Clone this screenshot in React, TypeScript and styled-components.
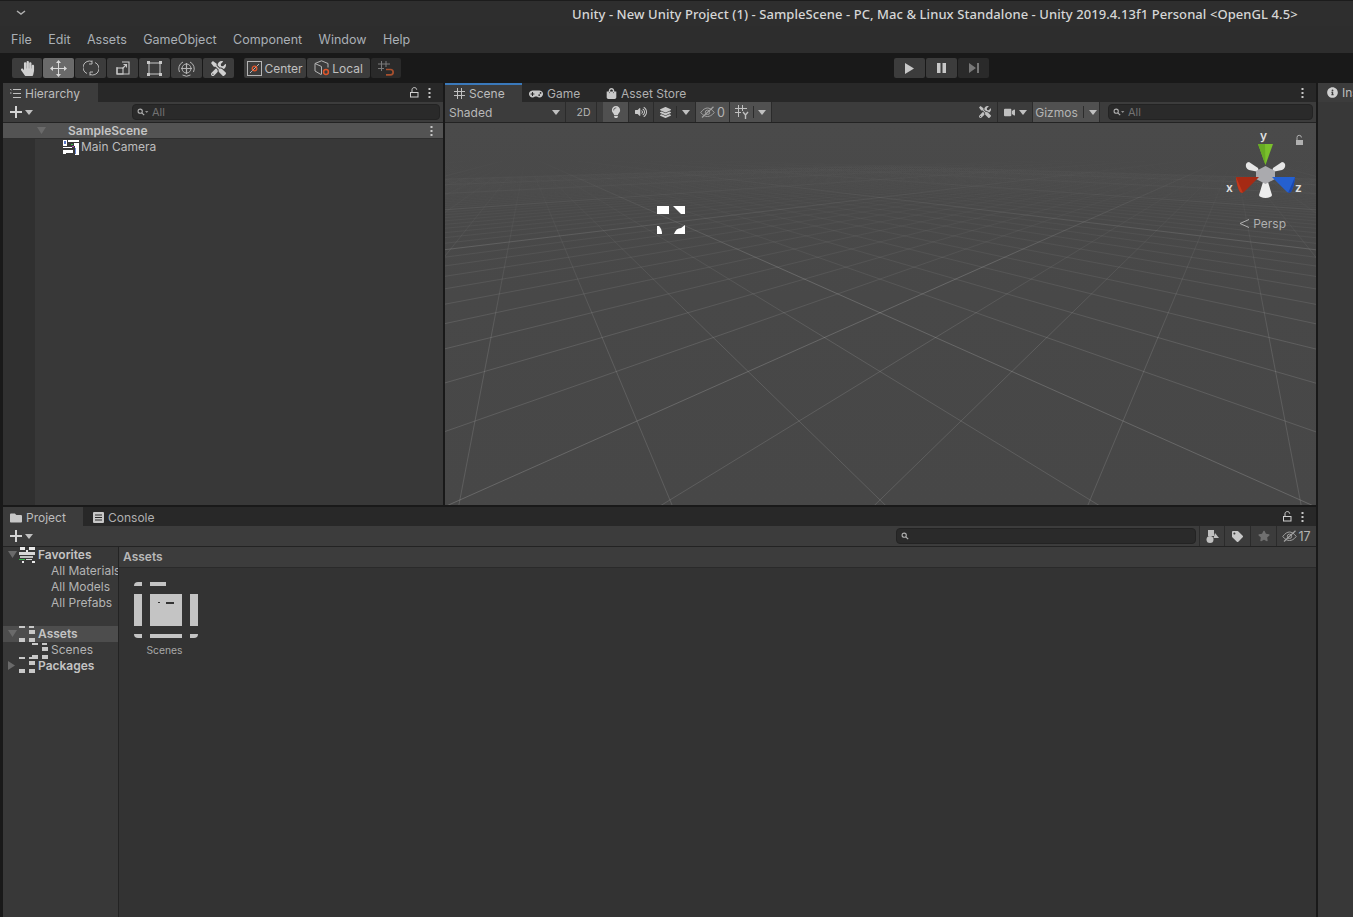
import { ReactNode } from "react";
import styled, { createGlobalStyle } from "styled-components";
import {
  FaGamepad,
  FaHandPaper,
  FaInfoCircle,
  FaLayerGroup,
  FaLightbulb,
  FaShoppingBag,
  FaStar,
  FaTag,
  FaTools,
  FaVideo,
  FaVolumeUp,
  FaFolder,
} from "react-icons/fa";

const GlobalStyle = createGlobalStyle`
  html, body {
    margin: 0;
    height: 100%;
    overflow: hidden;
    background: #191919;
    font-family: Inter, "Liberation Sans", sans-serif;
    font-size: 12px;
    color: #b8b8b8;
  }
  #root { height: 100%; }
`;

const Editor = styled.div`
  height: 917px;
  display: flex;
  flex-direction: column;
`;

const TitleBar = styled.div`
  height: 26px;
  box-sizing: border-box;
  border-top: 1px solid #1c1c1c;
  background: #2e2e2e;
  display: flex;
  align-items: center;
  position: relative;
  padding: 0 40px 0 572px;
`;

const TitleText = styled.div`
  font-family: "Noto Sans", sans-serif;
  font-weight: 500;
  font-size: 13px;
  letter-spacing: 0.07px;
  white-space: nowrap;
  color: #d6d6d6;
`;

const WindowChevron = styled.svg`
  position: absolute;
  left: 16px;
  top: 9px;
`;

const MenuBar = styled.div`
  height: 27px;
  background: #2d2d2d;
  display: flex;
  align-items: center;
  gap: 16.4px;
  padding-left: 11px;
`;

const MenuItem = styled.span`
  font-size: 12.5px;
  letter-spacing: 0.02px;
  color: #aab0b6;
`;

const MainToolbar = styled.div`
  height: 30px;
  background: #191919;
  display: flex;
  align-items: center;
  padding: 0 0 0 12px;
`;

const ToolGroup = styled.div<{ $gap?: number; $left?: number }>`
  display: flex;
  gap: ${(p) => p.$gap ?? 1}px;
  margin-left: ${(p) => p.$left ?? 0}px;
`;

const ToolButton = styled.div<{ $w?: number; $on?: boolean; $dim?: boolean }>`
  width: ${(p) => p.$w ?? 31}px;
  height: 20px;
  box-sizing: border-box;
  display: flex;
  align-items: center;
  justify-content: center;
  gap: 2px;
  font-size: 12px;
  color: #c0c0c0;
  border-radius: 2px;
  background: ${(p) => (p.$on ? "#6a6a6a" : p.$dim ? "#2a2a2a" : "#3c3c3c")};
`;

const Workspace = styled.div`
  flex: 1;
  min-height: 0;
  display: flex;
  padding-left: 3px;
`;

const MainColumn = styled.div`
  flex: 1;
  min-width: 0;
  display: flex;
  flex-direction: column;
  gap: 2px;
`;

const UpperRow = styled.div`
  height: 422px;
  display: flex;
  gap: 2px;
`;

const Panel = styled.div<{ $w?: number }>`
  display: flex;
  flex-direction: column;
  min-width: 0;
  background: #383838;
  ${(p) => (p.$w ? `width: ${p.$w}px; flex: none;` : "flex: 1;")}
`;

const TabStrip = styled.div`
  height: 19px;
  flex: none;
  background: #282828;
  display: flex;
  align-items: center;
`;

const Tab = styled.div<{ $w: number; $pad?: number; $active?: boolean; $accent?: boolean }>`
  width: ${(p) => p.$w}px;
  height: 100%;
  box-sizing: border-box;
  flex: none;
  display: flex;
  align-items: center;
  gap: 4px;
  padding: ${(p) => (p.$accent ? "0" : "2px")} 0 0 ${(p) => p.$pad ?? 7}px;
  white-space: nowrap;
  overflow: hidden;
  color: ${(p) => (p.$active ? "#bdbdbd" : "#b0b0b0")};
  background: ${(p) => (p.$active ? "#3c3c3c" : "transparent")};
  border-top: ${(p) => (p.$accent ? "2px solid #3a79bb" : "none")};
  svg { flex: none; }
`;

const Spacer = styled.div`
  flex: 1;
`;

const EdgeGap = styled.div`
  flex: 0 0 3px;
`;

const StripIcons = styled.div`
  display: flex;
  align-items: center;
  gap: 9px;
  padding-right: 12px;
  color: #c4c4c4;
`;

const PanelBar = styled.div`
  height: 21px;
  flex: none;
  box-sizing: border-box;
  border-bottom: 1px solid #232323;
  background: #3c3c3c;
  display: flex;
  align-items: center;
`;

const AddButton = styled.div`
  width: 32px;
  padding-left: 7px;
  box-sizing: border-box;
  display: flex;
  align-items: center;
  gap: 3px;
  flex: none;
`;

const SearchField = styled.div<{ $w?: number; $left?: number }>`
  height: 16px;
  box-sizing: border-box;
  border: 1px solid #232323;
  border-radius: 4px;
  background: #2a2a2a;
  display: flex;
  align-items: center;
  gap: 3px;
  padding-left: 4px;
  font-size: 11px;
  color: #727272;
  margin-left: ${(p) => p.$left ?? 0}px;
  ${(p) => (p.$w ? `width: ${p.$w}px; flex: none;` : "flex: 1;")}
`;

const HierarchyTree = styled.div`
  flex: 1;
  position: relative;
  background: linear-gradient(to right, #303030 32px, #383838 32px);
`;

const SceneRow = styled.div`
  height: 16px;
  box-sizing: border-box;
  background: #535353;
  border-bottom: 1px solid #2e2e2e;
  display: flex;
  align-items: center;
  padding: 0 10px 0 34px;
  font-weight: 600;
  color: #c4c4c4;
  gap: 22px;
`;

const ObjectRow = styled.div`
  height: 16px;
  box-sizing: border-box;
  display: flex;
  align-items: center;
  gap: 2px;
  padding: 0 0 1px 60px;
  color: #bdbdbd;
  svg { flex: none; margin-top: 1px; }
`;

const ToolStripGroup = styled.div`
  display: flex;
  align-items: center;
  height: 100%;
`;

const BarButton = styled.div<{ $w: number; $on?: boolean; $left?: number; $open?: boolean; $edge?: boolean; $gap?: number; $size?: number }>`
  width: ${(p) => p.$w}px;
  height: 100%;
  flex: none;
  box-sizing: border-box;
  margin-left: ${(p) => p.$left ?? 0}px;
  border-right: ${(p) => (p.$open ? "none" : "1px solid #2b2b2b")};
  border-left: ${(p) => (p.$edge ? "1px solid #2b2b2b" : "none")};
  display: flex;
  align-items: center;
  justify-content: center;
  gap: ${(p) => p.$gap ?? 4}px;
  font-size: ${(p) => p.$size ?? 12}px;
  color: #b4b4b4;
  background: ${(p) => (p.$on ? "#505050" : "#3c3c3c")};
`;

const ShadedSelect = styled.div`
  width: 121px;
  flex: none;
  height: 100%;
  box-sizing: border-box;
  display: flex;
  align-items: center;
  justify-content: space-between;
  padding: 0 5px 0 4px;
  border-right: 1px solid #2b2b2b;
  color: #b8b8b8;
`;

const BarDivider = styled.span`
  width: 1px;
  height: 12px;
  background: #2c2c2c;
  margin: 0 1px;
`;

const SceneView = styled.div`
  flex: 1;
  position: relative;
  overflow: hidden;
  background: linear-gradient(#4a4a4a 0, #484848 45%, #474747 100%);
`;

const GridCanvas = styled.svg`
  display: block;
`;

const CameraGizmo = styled.svg`
  position: absolute;
  left: 212px;
  top: 83px;
`;

const AxisGizmo = styled.svg`
  position: absolute;
  right: 9px;
  top: 5px;
`;

const PerspLabel = styled.div`
  position: absolute;
  right: 30px;
  top: 93px;
  display: flex;
  align-items: center;
  gap: 3px;
  color: #b0b0b0;
`;

const InspectorStub = styled.div`
  width: 35px;
  flex: none;
  margin-left: 2px;
  display: flex;
  flex-direction: column;
  background: #383838;
  overflow: hidden;
`;

const InspectorTab = styled.div`
  height: 19px;
  background: #3c3c3c;
  display: flex;
  align-items: center;
  gap: 4px;
  padding-left: 9px;
  white-space: nowrap;
  color: #bdbdbd;
  svg { flex: none; }
`;

const ProjectBody = styled.div`
  flex: 1;
  min-height: 0;
  display: flex;
`;

const FolderTree = styled.div`
  width: 115px;
  flex: none;
  box-sizing: content-box;
  border-right: 1px solid #232323;
  background: #383838;
  overflow: hidden;
`;

const TreeItem = styled.div<{ $pad: number; $bold?: boolean; $selected?: boolean; $top?: number }>`
  height: 16px;
  box-sizing: border-box;
  display: flex;
  align-items: center;
  white-space: nowrap;
  gap: 3px;
  padding: 0 0 1px ${(p) => p.$pad}px;
  margin-top: ${(p) => p.$top ?? 0}px;
  font-weight: ${(p) => (p.$bold ? 600 : 400)};
  color: ${(p) => (p.$bold ? "#c4c4c4" : "#b4b4b4")};
  background: ${(p) => (p.$selected ? "#4d4d4d" : "transparent")};
  svg { flex: none; overflow: visible; }
`;

const TreeArrow = styled.svg<{ $gap: number }>`
  margin-right: ${(p) => p.$gap}px;
`;

const AssetsPane = styled.div`
  flex: 1;
  min-width: 0;
  background: #333333;
`;

const Breadcrumb = styled.div`
  height: 21px;
  box-sizing: border-box;
  border-bottom: 1px solid #2a2a2a;
  background: #3c3c3c;
  display: flex;
  align-items: center;
  padding: 0 0 1px 4px;
  font-weight: 600;
  color: #b8b8b8;
`;

const AssetGrid = styled.div`
  display: flex;
  padding: 14px 0 0 15px;
`;

const AssetCard = styled.div`
  width: 64px;
  display: flex;
  flex-direction: column;
  align-items: center;
  gap: 6px;
  font-size: 10.3px;
  color: #a8a8a8;
`;

const AssetName = styled.span`
  margin-right: 3px;
`;

const Caret = ({ color = "#c0c0c0" }: { color?: string }) => (
  <svg width="8" height="5" viewBox="0 0 8 5">
    <path d="M0 0h8L4 5z" fill={color} />
  </svg>
);

const SearchIcon = ({ caret = true }: { caret?: boolean }) => (
  <svg width="12" height="8" viewBox="0 0 12 8" fill="none">
    <circle cx="3.2" cy="3.2" r="2.1" stroke="#b0b0b0" strokeWidth="1.1" />
    <path d="M4.8 4.8 7.2 7.2" stroke="#b0b0b0" strokeWidth="1.2" />
    {caret && <path d="M8 3h3.4L9.7 5z" fill="#909090" />}
  </svg>
);

const Dots = () => (
  <svg width="3" height="10" viewBox="0 0 3 10">
    <rect x="0.5" y="0" width="2" height="2" fill="#c8c8c8" />
    <rect x="0.5" y="4" width="2" height="2" fill="#c8c8c8" />
    <rect x="0.5" y="8" width="2" height="2" fill="#c8c8c8" />
  </svg>
);

const OpenLock = ({ color = "#d0d0d0" }: { color?: string }) => (
  <svg width="9" height="11" viewBox="0 0 9 11" fill="none">
    <path d="M2 5V2.7C2 1.4 3 .6 4.3.6S6.700 1.400 6.700 2.700" stroke={color} />
    <rect x="0.5" y="5.5" width="7.500" height="4.500" stroke={color} />
  </svg>
);

const Plus = () => (
  <svg width="12" height="12" viewBox="0 0 12 12">
    <path d="M5 0h2v5h5v2H7v5H5V7H0V5h5z" fill="#d4d4d4" />
  </svg>
);

const HiddenEye = () => (
  <svg width="15" height="12" viewBox="0 0 15 12" fill="none" stroke="#a0a0a0">
    <path d="M.8 6.500C3 3.300 5.500 2 7.500 2s4.500 1.300 6.700 4.500C12 9.500 9.500 10.500 7.500 10.500S3 9.500.8 6.500z" />
    <circle cx="7.500" cy="6.300" r="2.200" />
    <path d="M2 11.500 13.500.8" strokeWidth="1.300" />
  </svg>
);

const GridGlyph = ({ color = "#c0c0c0" }: { color?: string }) => (
  <svg width="11" height="11" viewBox="0 0 11 11" stroke={color} fill="none">
    <path d="M3.500 0v11M7.500 0v11M0 3.500h11M0 7.500h11" />
  </svg>
);

const GridVisibility = () => (
  <svg width="14" height="14" viewBox="0 0 14 14" fill="none" stroke="#c0c0c0">
    <path d="M3.500 0v12M7.500 0v6M0 3.500h12M0 7.500h6" />
    <path d="M8 7l2.500 3L13 7M10.500 10v4" strokeWidth="1.400" />
  </svg>
);

const MoveIcon = () => (
  <svg width="17" height="17" viewBox="0 0 17 17" fill="#d8d8d8">
    <path d="M8.500 0 11 3H6zM8.500 17 6 14h5zM0 8.500 3 6v5zM17 8.500 14 11V6z" />
    <path d="M8 3h1v11H8zM3 8h11v1H3z" />
  </svg>
);

const RotateIcon = () => (
  <svg width="16" height="16" viewBox="0 0 16 16" fill="none" stroke="#b8b8b8">
    <path d="M9 1.500A6.500 6.500 0 0 0 4 13.500" />
    <path d="M7 14.500A6.500 6.500 0 0 0 12 2.500" />
    <path d="M9 .5v3.500h-3M7 15.500V12h3" />
  </svg>
);

const ScaleIcon = () => (
  <svg width="14" height="14" viewBox="0 0 14 14" fill="none" stroke="#c8c8c8" strokeWidth="1.100">
    <path d="M6 1H13V13H1V6" />
    <rect x="1" y="7" width="6" height="6" />
    <path d="M6.500 7.500 10.500 3.500M7.500 3.500h3v3" />
  </svg>
);

const RectIcon = () => (
  <svg width="15" height="15" viewBox="0 0 15 15" fill="#c8c8c8">
    <path d="M2 2h11v11H2z" fill="none" stroke="#c8c8c8" />
    <rect x="0" y="0" width="3" height="3" />
    <rect x="12" y="0" width="3" height="3" />
    <rect x="0" y="12" width="3" height="3" />
    <rect x="12" y="12" width="3" height="3" />
  </svg>
);

const TransformIcon = () => (
  <svg width="17" height="17" viewBox="0 0 17 17" fill="none" stroke="#b4b4b4">
    <path d="M1.500 12A7.500 7.500 0 0 1 5 2M12 2A7.500 7.500 0 0 1 15.500 12M4.500 15a7.500 7.500 0 0 0 8 0" />
    <circle cx="8.500" cy="8.500" r="4.500" />
    <path d="M8.500 3v11M3 8.500h11" strokeWidth="1.200" />
  </svg>
);

const PivotIcon = () => (
  <svg width="15" height="15" viewBox="0 0 15 15" fill="none">
    <rect x="0.500" y="0.500" width="14" height="14" stroke="#b4b4b4" />
    <path d="M3 12 12 3" stroke="#b4b4b4" />
    <circle cx="7.500" cy="7.500" r="2.300" stroke="#e0562b" strokeWidth="1.300" />
  </svg>
);

const LocalIcon = () => (
  <svg width="16" height="16" viewBox="0 0 16 16" fill="none">
    <path d="M7.500 .8 14 3.500v4M7.500.8 1 3.500V11l6 3.500M1 3.500l6.500 3v8" stroke="#b4b4b4" />
    <circle cx="12" cy="12" r="2.400" stroke="#e0562b" strokeWidth="1.500" />
  </svg>
);

const SnapIcon = () => (
  <svg width="17" height="15" viewBox="0 0 17 15" fill="none">
    <path d="M3.500 0v10M8 0v6M0 3h12M0 7.500h6" stroke="#7a7a7a" />
    <path d="M8 8.500h4.500a2.500 2.500 0 0 1 0 5.300H8" stroke="#a8502e" strokeWidth="1.700" />
  </svg>
);

const HierarchyGlyph = () => (
  <svg width="11" height="9" viewBox="0 0 11 9" fill="none" stroke="#c0c0c0">
    <path d="M3 .5h8M3 4.500h8M3 8.500h8M0 0l1.500 1M0 4h1.500" />
  </svg>
);

const ConsoleGlyph = () => (
  <svg width="11" height="11" viewBox="0 0 11 11">
    <rect x="0" y="0" width="11" height="11" rx="1" fill="#c8c8c8" />
    <path d="M2 3h7M2 5.500h7M2 8h7" stroke="#282828" />
  </svg>
);

const FilterShapes = () => (
  <svg width="13" height="13" viewBox="0 0 13 13" fill="#c0c0c0">
    <rect x="2" y="0" width="6" height="6" />
    <circle cx="4" cy="9.500" r="3.500" />
    <path d="M9 3l4 5H7.500z" />
  </svg>
);

// corrupted editor textures, drawn block by block
const CameraTexture = () => (
  <svg width="16" height="15" viewBox="0 0 16 15">
    <rect x="0" y="0" width="4" height="6" fill="#fff" />
    <rect x="1" y="1" width="2" height="3" fill="#5a78c8" />
    <rect x="5" y="0" width="11" height="2" fill="#fff" />
    <rect x="6" y="3" width="5" height="3" fill="#383838" />
    <rect x="8" y="4" width="2" height="1" fill="#39b54a" />
    <rect x="11" y="3" width="5" height="3" fill="#fff" />
    <rect x="0" y="7" width="9" height="1" fill="#fff" />
    <rect x="9" y="6" width="2" height="1" fill="#b04ac0" />
    <rect x="0" y="10" width="10" height="3" fill="#fff" />
    <rect x="12" y="6" width="4" height="9" fill="#fff" />
    <rect x="12" y="8" width="1" height="6" fill="#6a8ad8" />
    <rect x="0" y="13" width="3" height="1" fill="#fff" />
  </svg>
);

const FavoritesTexture = () => (
  <svg width="16" height="16" viewBox="0 0 16 16">
    <rect x="1" y="0" width="5" height="3" fill="#e8e8e8" />
    <rect x="10" y="0" width="6" height="3" fill="#e8e8e8" />
    <rect x="7" y="3" width="2" height="2" fill="#e8e8e8" />
    <rect x="0" y="5" width="16" height="3" fill="#d8d8d8" />
    <rect x="1" y="9" width="13" height="2" fill="#c0c0c0" />
    <rect x="0" y="12" width="6" height="1" fill="#39b54a" />
    <rect x="7" y="12" width="6" height="1" fill="#d8d8d8" />
    <rect x="3" y="14" width="2" height="2" fill="#e8e8e8" />
    <rect x="13" y="14" width="3" height="2" fill="#e8e8e8" />
  </svg>
);

const FolderTexture = ({ lift = 0 }: { lift?: number }) => (
  <svg width="16" height="16" viewBox="0 0 16 16" style={{ marginTop: lift }}>
    <rect x="0" y="0" width="6" height="2" fill="#c8c8c8" />
    <rect x="10" y="0" width="5" height="2" fill="#c8c8c8" />
    <rect x="10" y="4" width="6" height="4" fill="#c8c8c8" />
    <rect x="0" y="12" width="6" height="4" fill="#c8c8c8" />
    <rect x="10" y="12" width="6" height="4" fill="#c8c8c8" />
  </svg>
);

const ScenesFolder = () => (
  <svg width="64" height="56" viewBox="0 0 64 56" fill="#c4c4c4">
    <path d="M0 4a4 4 0 0 1 4-4h4v4z" />
    <rect x="16" y="0" width="16" height="4" />
    <rect x="0" y="12" width="8" height="32" />
    <path d="M16 12h32v32H16z" />
    <rect x="24" y="20" width="2" height="1" fill="#333" />
    <rect x="32" y="20" width="8" height="2" fill="#333" />
    <rect x="56" y="12" width="8" height="32" />
    <path d="M0 52h8v4H4a4 4 0 0 1-4-4z" />
    <rect x="16" y="52" width="32" height="4" />
    <path d="M56 52h8a4 4 0 0 1-4 4h-4z" />
  </svg>
);

// floor grid, two vanishing points on a horizon at y=155
const HORIZON = 155;
const CENTER_X = 880;
const project = (a: number, depth: number, flip: boolean) => {
  const w = 0.002899 + 0.00086 * depth;
  const b = depth - a;
  const side = (a - b) / 2;
  return {
    x: CENTER_X + (flip ? -side : side) * (0.609 / w),
    y: HORIZON + 1 / w,
  };
};

const gridLines: { key: string; x1: number; y1: number; x2: number; y2: number; major: boolean }[] = [];
for (let k = -48; k <= 52; k++) {
  for (const flip of [false, true]) {
    const near = project(k, -3, flip);
    const far = project(k, 1500, flip);
    // the axes cross at a=b=2, heavy lines every 10 units from there
    gridLines.push({
      key: `${k}-${flip}`,
      x1: near.x,
      y1: near.y,
      x2: far.x,
      y2: far.y,
      major: (k - 2) % 10 === 0,
    });
  }
}

const SceneGrid = () => (
  <GridCanvas width="871" height="382" viewBox="445 123 871 382">
    <defs>
      <linearGradient id="minorFade" gradientUnits="userSpaceOnUse" x1="0" y1="158" x2="0" y2="340">
        <stop offset="0" stopColor="#fff" stopOpacity="0" />
        <stop offset="0.2" stopColor="#fff" stopOpacity="0.015" />
        <stop offset="1" stopColor="#fff" stopOpacity="0.12" />
      </linearGradient>
      <linearGradient id="majorFade" gradientUnits="userSpaceOnUse" x1="0" y1="158" x2="0" y2="270">
        <stop offset="0" stopColor="#fff" stopOpacity="0" />
        <stop offset="0.4" stopColor="#fff" stopOpacity="0.06" />
        <stop offset="1" stopColor="#fff" stopOpacity="0.17" />
      </linearGradient>
    </defs>
    {gridLines.map((l) => (
      <line
        key={l.key}
        x1={l.x1}
        y1={l.y1}
        x2={l.x2}
        y2={l.y2}
        stroke={l.major ? "url(#majorFade)" : "url(#minorFade)"}
        strokeWidth="1"
      />
    ))}
  </GridCanvas>
);

const Gizmo = () => (
  <AxisGizmo width="82" height="72" viewBox="1225 128 82 72">
    <path d="M1249 162 1258 168 1259 172 1249 170Q1245 168 1246 164 1247 162 1249 162z" fill="#e6e6e6" />
    <path d="M1282 162 1273 168 1272 172 1282 170Q1286 168 1285 164 1284 162 1282 162z" fill="#e6e6e6" />
    <path d="M1263 182 1265.500 178 1268 182 1272 195a6.500 3 0 0 1-13 0z" fill="#ececec" />
    <path d="M1256 171 1265.500 166 1275 171 1275 179 1265.500 184 1256 179z" fill="#aaaaae" />
    <path d="M1258 144h15l-7.500 21z" fill="#7ac02c" />
    <path d="M1258 144h7l.5 21z" fill="#68ab24" />
    <path d="M1236 177h23l-13 13q-3 4-6 2-3-5-4-15z" fill="#a52a14" />
    <path d="M1236 177l7 16q-1 0-3-1-3-5-4-15z" fill="#c23a1c" />
    <path d="M1295 177h-23l13 13q3 4 6 2 3-5 4-15z" fill="#2560d0" />
    <path d="M1295 177l-7 16q1 0 3-1 3-5 4-15z" fill="#1a48b0" />
    <text x="1260" y="140" fill="#e0e0e0" fontSize="12" fontWeight="600" fontFamily="Inter, sans-serif">y</text>
    <text x="1226" y="192" fill="#e0e0e0" fontSize="12" fontWeight="600" fontFamily="Inter, sans-serif">x</text>
    <text x="1295" y="192" fill="#e0e0e0" fontSize="12" fontWeight="600" fontFamily="Inter, sans-serif">z</text>
    <path d="M1297 140v-2.500a2.200 2.200 0 0 1 4.400 0" stroke="#b0b0b0" fill="none" />
    <rect x="1296" y="140" width="7" height="5" fill="#b0b0b0" />
  </AxisGizmo>
);

const CameraMark = () => (
  <CameraGizmo width="28" height="28" viewBox="0 0 28 28" fill="#fff">
    <path d="M0 0h12v8H0zM5 0 8 2v4L5 8z" />
    <path d="M16 0h12v8h-4z" />
    <path d="M0 20h2q3 3 3 8H0z" />
    <path d="M17 28q2-6 7-6l4-3v9z" />
  </CameraGizmo>
);

const DownArrow = ({ gap = 0 }: { gap?: number }) => (
  <TreeArrow $gap={gap} width="9" height="7" viewBox="0 0 9 7">
    <path d="M0 0h9L4.500 7z" fill="#6a6a6a" />
  </TreeArrow>
);

const RightArrow = ({ gap = 0 }: { gap?: number }) => (
  <TreeArrow $gap={gap} width="7" height="9" viewBox="0 0 7 9">
    <path d="M0 0l7 4.500L0 9z" fill="#6a6a6a" />
  </TreeArrow>
);

const Tools = ({ children }: { children: ReactNode }) => <ToolGroup>{children}</ToolGroup>;

export default function App() {
  return (
    <Editor>
      <GlobalStyle />
      <TitleBar>
        <WindowChevron width="10" height="6" viewBox="0 0 10 6" fill="none" stroke="#b0b0b0" strokeWidth="1.500">
          <path d="M1 1l4 3 4-3" />
        </WindowChevron>
        <TitleText>Unity - New Unity Project (1) - SampleScene - PC, Mac &amp; Linux Standalone - Unity 2019.4.13f1 Personal &lt;OpenGL 4.5&gt;</TitleText>
      </TitleBar>
      <MenuBar>
        {["File", "Edit", "Assets", "GameObject", "Component", "Window", "Help"].map((m) => (
          <MenuItem key={m}>{m}</MenuItem>
        ))}
      </MenuBar>
      <MainToolbar>
        <Tools>
          <ToolButton $w={30}><FaHandPaper size={15} color="#d0d0d0" /></ToolButton>
          <ToolButton $on><MoveIcon /></ToolButton>
          <ToolButton><RotateIcon /></ToolButton>
          <ToolButton><ScaleIcon /></ToolButton>
          <ToolButton><RectIcon /></ToolButton>
          <ToolButton><TransformIcon /></ToolButton>
          <ToolButton><FaTools size={15} color="#d0d0d0" /></ToolButton>
        </Tools>
        <ToolGroup $left={10}>
          <ToolButton $w={62}><PivotIcon />Center</ToolButton>
          <ToolButton $w={63}><LocalIcon />Local</ToolButton>
          <ToolButton $w={30} $dim><SnapIcon /></ToolButton>
        </ToolGroup>
        <ToolGroup $left={493}>
          <ToolButton><svg width="9" height="11" viewBox="0 0 9 11"><path d="M0 0l9 5.500L0 11z" fill="#c8c8c8" /></svg></ToolButton>
          <ToolButton><svg width="9" height="10" viewBox="0 0 9 10"><path d="M0 0h3.500v10H0zM5.500 0H9v10H5.500z" fill="#c8c8c8" /></svg></ToolButton>
          <ToolButton $dim><svg width="10" height="10" viewBox="0 0 10 10"><path d="M0 0l7 5-7 5zM8 0h2v10H8z" fill="#777" /></svg></ToolButton>
        </ToolGroup>
      </MainToolbar>
      <Workspace>
        <MainColumn>
          <UpperRow>
            <Panel $w={440}>
              <TabStrip>
                <Tab $w={95} $active><HierarchyGlyph />Hierarchy</Tab>
                <Spacer />
                <StripIcons><OpenLock /><Dots /></StripIcons>
              </TabStrip>
              <PanelBar>
                <AddButton><Plus /><Caret /></AddButton>
                <SearchField $w={308} $left={97}><SearchIcon />All</SearchField>
              </PanelBar>
              <HierarchyTree>
                <SceneRow>
                  <DownArrow />
                  SampleScene
                  <Spacer />
                  <Dots />
                </SceneRow>
                <ObjectRow><CameraTexture />Main Camera</ObjectRow>
              </HierarchyTree>
            </Panel>
            <Panel>
              <TabStrip>
                <Tab $w={77} $pad={9} $active $accent><GridGlyph />Scene</Tab>
                <Tab $w={77}><FaGamepad size={14} color="#c8c8c8" />Game</Tab>
                <Tab $w={100}>
                  <FaShoppingBag size={11} color="#c8c8c8" />Asset Store
                </Tab>
                <Spacer />
                <StripIcons><Dots /></StripIcons>
              </TabStrip>
              <PanelBar>
                <ToolStripGroup>
                  <ShadedSelect>Shaded<Caret /></ShadedSelect>
                  <BarButton $w={26} $left={5} $size={10.5}>2D</BarButton>
                  <BarButton $w={26} $left={6} $on><FaLightbulb size={12} color="#d0d0d0" /></BarButton>
                  <BarButton $w={25}><FaVolumeUp size={12} color="#c8c8c8" /></BarButton>
                  <BarButton $w={42}><FaLayerGroup size={11} color="#c8c8c8" /><BarDivider /><Caret /></BarButton>
                  <BarButton $w={34} $on $gap={2} $size={12.5}><HiddenEye />0</BarButton>
                  <BarButton $w={42} $on $gap={3}><GridVisibility /><BarDivider /><Caret /></BarButton>
                </ToolStripGroup>
                <Spacer />
                <ToolStripGroup>
                  <BarButton $w={26}><FaTools size={12} color="#c0c0c0" /></BarButton>
                  <BarButton $w={35}><FaVideo size={11} color="#c0c0c0" /><Caret /></BarButton>
                  <BarButton $w={67} $on><span>Gizmos</span><BarDivider /><Caret /></BarButton>
                </ToolStripGroup>
                <SearchField $w={205} $left={8}><SearchIcon />All</SearchField>
                <EdgeGap />
              </PanelBar>
              <SceneView>
                <SceneGrid />
                <CameraMark />
                <Gizmo />
                <PerspLabel>
                  <svg width="11" height="9" viewBox="0 0 11 9" fill="none" stroke="#b0b0b0">
                    <path d="M10 .5 1 4.500 10 8.500" />
                  </svg>
                  Persp
                </PerspLabel>
              </SceneView>
            </Panel>
          </UpperRow>
          <Panel>
            <TabStrip>
              <Tab $w={80} $active><FaFolder size={12} color="#c8c8c8" />Project</Tab>
              <Tab $w={90} $pad={10}><ConsoleGlyph />Console</Tab>
              <Spacer />
              <StripIcons><OpenLock /><Dots /></StripIcons>
            </TabStrip>
            <PanelBar>
              <AddButton><Plus /><Caret /></AddButton>
              <Spacer />
              <SearchField $w={300}><SearchIcon caret={false} /></SearchField>
              <BarButton $w={26} $left={3} $edge><FilterShapes /></BarButton>
              <BarButton $w={26}><FaTag size={11} color="#c8c8c8" /></BarButton>
              <BarButton $w={26}><FaStar size={12} color="#707070" /></BarButton>
              <BarButton $w={39} $open $gap={1} $size={12.5}><HiddenEye />17</BarButton>
            </PanelBar>
            <ProjectBody>
              <FolderTree>
                <TreeItem $pad={5} $bold><DownArrow gap={-1} /><FavoritesTexture />Favorites</TreeItem>
                <TreeItem $pad={48}>All Materials</TreeItem>
                <TreeItem $pad={48}>All Models</TreeItem>
                <TreeItem $pad={48}>All Prefabs</TreeItem>
                <TreeItem $pad={5} $bold $selected $top={15}><DownArrow gap={-1} /><FolderTexture />Assets</TreeItem>
                <TreeItem $pad={29}><FolderTexture lift={2} />Scenes</TreeItem>
                <TreeItem $pad={5} $bold><RightArrow gap={1} /><FolderTexture lift={-2} />Packages</TreeItem>
              </FolderTree>
              <AssetsPane>
                <Breadcrumb>Assets</Breadcrumb>
                <AssetGrid>
                  <AssetCard>
                    <ScenesFolder />
                    <AssetName>Scenes</AssetName>
                  </AssetCard>
                </AssetGrid>
              </AssetsPane>
            </ProjectBody>
          </Panel>
        </MainColumn>
        <InspectorStub>
          <InspectorTab><FaInfoCircle size={11} color="#d0d0d0" />Inspector</InspectorTab>
        </InspectorStub>
      </Workspace>
    </Editor>
  );
}
